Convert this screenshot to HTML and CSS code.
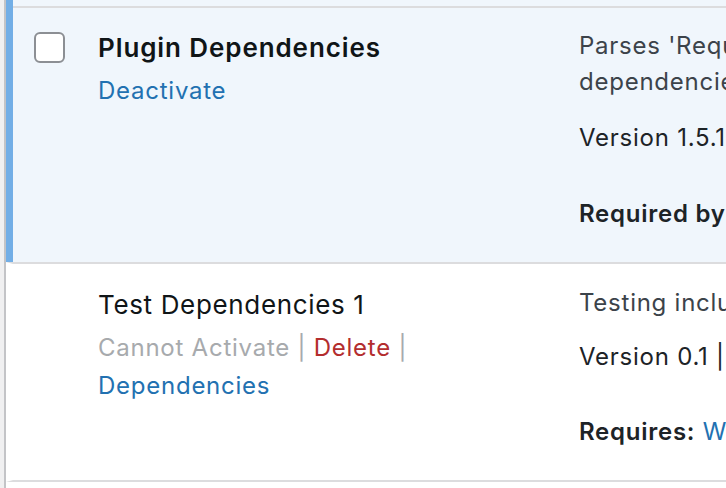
FILE: index.html
```html
<!DOCTYPE html>
<html lang="en">
<head>
<meta charset="utf-8">
<title>Plugins</title>
<link rel="stylesheet" href="styles.css">
</head>
<body>
<div class="table">
  <div class="row prev active"></div>
  <div class="row active first">
    <div class="check"><span class="checkbox"></span></div>
    <div class="name">
      <strong class="title">Plugin Dependencies</strong>
      <div class="actions"><a class="link">Deactivate</a></div>
    </div>
    <div class="desc">
      <p class="text">Parses 'Requires Plugins' header, add plugin install<br>dependencies tab, and information about dependencies.</p>
      <p class="meta">Version 1.5.1 | By Andy Fragen, Colin Stewart, Paul Biron | <a class="link">View details</a></p>
      <p class="req"><strong>Required by:</strong> Test Dependencies 1</p>
    </div>
  </div>
  <div class="row inactive">
    <div class="check"></div>
    <div class="name">
      <span class="title plain">Test Dependencies 1</span>
      <div class="actions"><span class="muted">Cannot Activate</span> <span class="sep">|</span> <a class="delete">Delete</a> <span class="sep">|</span><br><a class="link">Dependencies</a></div>
    </div>
    <div class="desc">
      <p class="text">Testing inclusion of Requires Plugins header.</p>
      <p class="meta">Version 0.1 | By Andy Fragen | <a class="link">View details</a></p>
      <p class="req"><strong>Requires:</strong> <a class="link">WooCommerce</a></p>
    </div>
  </div>
</div>
</body>
</html>
```

FILE: styles.css
```css
html, body {
  margin: 0;
  padding: 0;
  background: #f0f0f1;
  overflow: hidden;
  width: 726px;
  height: 488px;
}
body {
  font-family: Inter, "Noto Sans", sans-serif;
  font-size: 24px;
  line-height: 36px;
  letter-spacing: 0.75px;
  color: #1d2327;
}
.table {
  margin-left: 4px;
  border-left: 2px solid #c3c4c7;
  background: #fff;
  width: 1200px;
  height: 488px;
}
.row {
  display: grid;
  grid-template-columns: 85px 481px 600px;
  border-left: 7px solid #fff;
  background: #fff;
}
.row.active {
  border-left-color: #72aee6;
  background: #f0f6fc;
}
.prev {
  height: 8px;
  box-shadow: inset 0 -2px 0 #dcdcde;
}
.first {
  height: 254px;
}
.inactive {
  border-top: 2px solid #dcdcde;
  border-bottom: 2px solid #dcdcde;
  height: 216px;
}
.check {
  padding-top: 24px;
  padding-left: 21px;
}
.checkbox {
  display: block;
  width: 27px;
  height: 27px;
  border: 2px solid #8c8f94;
  border-radius: 6px;
  background: #fff;
}
.name {
  padding-top: 22px;
}
.inactive .name {
  padding-top: 23px;
}
.title {
  display: block;
  font-size: 26px;
  font-weight: 600;
  letter-spacing: 0.9px;
  white-space: nowrap;
  color: #101517;
}
.title.plain {
  font-weight: 400;
  letter-spacing: 0.65px;
}
.actions {
  margin-top: 6px;
  line-height: 38px;
  white-space: nowrap;
}
.link {
  color: #2271b1;
}
.delete {
  color: #b32d2e;
}
.muted, .sep {
  color: #a7aaad;
}
.desc {
  padding-top: 20px;
  white-space: nowrap;
}
.inactive .desc {
  padding-top: 21px;
}
.desc p {
  margin: 0;
}
.text {
  color: #3c434a;
}
.meta {
  padding-top: 20px;
}
.inactive .meta {
  padding-top: 18px;
}
.req {
  padding-top: 40px;
}
.inactive .req {
  padding-top: 39px;
}
.req strong {
  font-weight: 600;
}
```
